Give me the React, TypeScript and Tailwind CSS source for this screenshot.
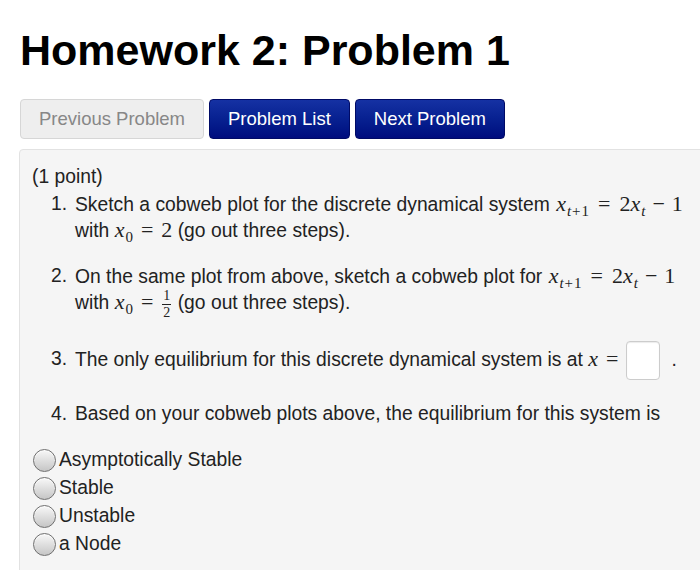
import React from 'react';

// x with an optional subscript, set in a serif face like the math renderer
function MathVar({ name, sub }: { name: string; sub?: React.ReactNode }) {
    return (
        <span className="inline-flex items-baseline">
            <span className="italic">{name}</span>
            {sub !== undefined && (
                <span className="text-[15px] relative top-[5px] ml-[1px]">{sub}</span>
            )}
        </span>
    );
}

function Recurrence() {
    return (
        <span className="font-['Liberation_Serif',serif] text-[22px] inline-flex items-baseline ml-[1px]">
            <MathVar name="x" sub={<span className="inline-flex"><span className="italic">t</span><span className="mx-[1px]">+</span>1</span>} />
            <span className="mx-[9px]">=</span>
            <span>2</span>
            <MathVar name="x" sub={<span className="italic">t</span>} />
            <span className="mx-[7px]">−</span>
            <span>1</span>
        </span>
    );
}

function Half() {
    return (
        <span className="inline-flex flex-col items-center leading-none text-[14px] mx-[1px] relative top-[-9px]">
            <span>1</span>
            <span className="w-[9px] h-px bg-[#222] my-[1px]" />
            <span>2</span>
        </span>
    );
}

function XZero({ value }: { value: React.ReactNode }) {
    return (
        <span className="font-['Liberation_Serif',serif] text-[22px] leading-none inline-flex items-baseline">
            <MathVar name="x" sub="0" />
            <span className="mx-[8px]">=</span>
            {value}
        </span>
    );
}

function Item({ n, children, className = '' }: { n: number; children: React.ReactNode; className?: string }) {
    return (
        <div className={'flex ' + className}>
            <span className="w-[43px] shrink-0 pr-[8px] text-right h-[27px] leading-[27px]">{n}.</span>
            <div className="flex flex-col">{children}</div>
        </div>
    );
}

function Line({ children }: { children: React.ReactNode }) {
    return <div className="h-[27px] leading-[27px] whitespace-pre">{children}</div>;
}

function Radio({ label }: { label: string }) {
    return (
        <label className="h-[28px] flex items-center gap-[3px]">
            <span className="ml-[1px] w-[23px] h-[23px] rounded-full border border-[#6f6f6f] bg-linear-to-b from-[#f8f8f8] to-[#c6c6c6] shadow-[inset_0_1px_1px_rgba(255,255,255,0.8)]" />
            <span>{label}</span>
        </label>
    );
}

export default function App() {
    return (
        <div className="w-[700px] h-[570px] overflow-hidden bg-white font-['Liberation_Sans',Arial,sans-serif] text-[#222]">
            <div className="pt-[29px] pl-[20px]">
                <h1 className="text-[43px] font-bold leading-none text-black whitespace-nowrap">Homework 2: Problem 1</h1>

                {/* Navigation */}
                <div className="flex gap-[5px] mt-[27px] text-[18.5px]">
                    <button className="h-[40px] px-[18px] rounded-[4px] border border-[#d6d6d6] bg-[#eeeeee] text-[#878787]">
                        Previous Problem
                    </button>
                    <button className="h-[40px] px-[18px] rounded-[4px] border border-[#000a66] bg-linear-to-b from-[#1531a3] to-[#000c7e] text-white">
                        Problem List
                    </button>
                    <button className="h-[40px] px-[18px] rounded-[4px] border border-[#000a66] bg-linear-to-b from-[#1531a3] to-[#000c7e] text-white">
                        Next Problem
                    </button>
                </div>
            </div>

            {/* Problem body */}
            <div className="ml-[19px] mt-[10px] w-[720px] h-[460px] rounded-[4px] border border-[#e2e2e2] bg-[#f5f5f5] pt-[13px] pl-[12px] text-[19.3px]">
                <Line>(1 point)</Line>

                <Item n={1}>
                    <Line>
                        Sketch a cobweb plot for the discrete dynamical system <Recurrence />
                    </Line>
                    <Line>
                        with <XZero value={<span>2</span>} /> (go out three steps).
                    </Line>
                </Item>

                <Item n={2} className="mt-[18px]">
                    <Line>
                        On the same plot from above, sketch a cobweb plot for <Recurrence />
                    </Line>
                    <Line>
                        with <XZero value={<Half />} /> (go out three steps).
                    </Line>
                </Item>

                <div className="flex mt-[21px] h-[44px] leading-[44px]">
                    <span className="w-[43px] shrink-0 pr-[8px] text-right">3.</span>
                    <div className="whitespace-pre">
                        The only equilibrium for this discrete dynamical system is at{' '}
                        <span className="font-['Liberation_Serif',serif] text-[22px]">
                            <span className="italic">x</span>
                            <span className="mx-[8px]">=</span>
                        </span>
                        <span className="inline-block align-middle w-[34px] h-[39px] rounded-[4px] border border-[#cccccc] bg-white shadow-[inset_0_1px_1px_rgba(0,0,0,0.08)]" />
                        <span className="ml-[11px]">.</span>
                    </div>
                </div>

                <Item n={4} className="mt-[19px]">
                    <Line>Based on your cobweb plots above, the equilibrium for this system is</Line>
                </Item>

                <div className="mt-[19px] flex flex-col">
                    <Radio label="Asymptotically Stable" />
                    <Radio label="Stable" />
                    <Radio label="Unstable" />
                    <Radio label="a Node" />
                </div>
            </div>
        </div>
    );
}
